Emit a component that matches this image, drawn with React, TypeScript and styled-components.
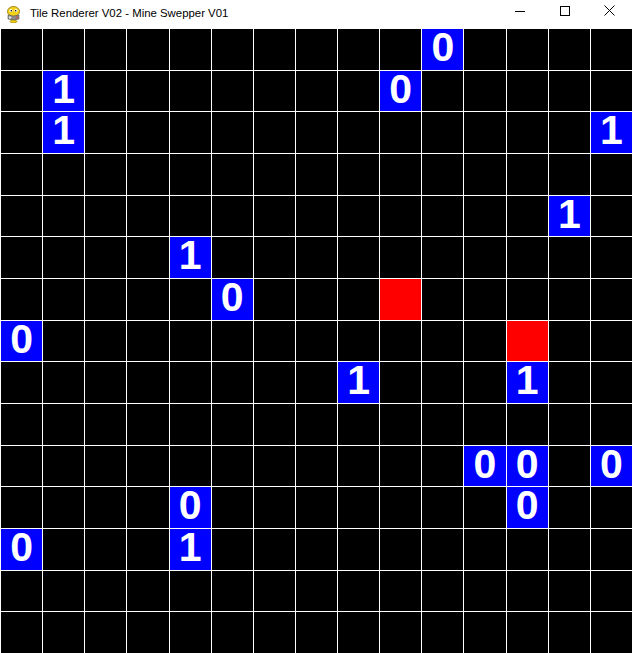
import styled, { createGlobalStyle } from 'styled-components';

const GlobalStyle = createGlobalStyle`
  html, body {
    margin: 0;
    padding: 0;
    background: #ffffff;
    overflow: hidden;
  }
`;

const COLS = 15;
const ROWS = 15;

// revealed tiles: "r,c" -> value ('0', '1' or 'mine')
const tiles: Record<string, string> = {
  '0,10': '0',
  '1,1': '1',
  '1,9': '0',
  '2,1': '1',
  '2,14': '1',
  '4,13': '1',
  '5,4': '1',
  '6,5': '0',
  '6,9': 'mine',
  '7,0': '0',
  '7,12': 'mine',
  '8,8': '1',
  '8,12': '1',
  '10,11': '0',
  '10,12': '0',
  '10,14': '0',
  '11,4': '0',
  '11,12': '0',
  '12,0': '0',
  '12,4': '1',
};

const Window = styled.div`
  width: 632px;
  height: 653px;
  display: flex;
  flex-direction: column;
  background: #ffffff;
`;

const TitleBar = styled.div`
  height: 29px;
  flex: none;
  display: flex;
  align-items: center;
  background: #ffffff;
  font-family: 'Liberation Sans', Arial, sans-serif;
  font-size: 11.4px;
  color: #000000;
`;

const AppIcon = styled.svg`
  width: 17px;
  height: 17px;
  margin-left: 5px;
  margin-right: 8px;
`;

const Title = styled.span`
  flex: 1;
  line-height: 1;
  margin-top: -1px;
`;

const Controls = styled.div`
  display: flex;
  height: 29px;
`;

const CtrlButton = styled.div`
  width: 45px;
  height: 29px;
  display: flex;
  align-items: center;
  justify-content: center;
  margin-top: -4px;
`;

const Board = styled.div`
  flex: 1;
  margin-left: 1px;
  display: grid;
  grid-template-columns: repeat(${COLS}, 1fr);
  grid-template-rows: repeat(${ROWS}, 1fr);
  gap: 1px;
  background: #ffffff;
`;

const Tile = styled.div<{ $kind: string }>`
  background: ${(p) =>
    p.$kind === 'mine' ? '#ff0000' : p.$kind === 'hidden' ? '#000000' : '#0000ff'};
  display: flex;
  justify-content: center;
  align-items: flex-start;
`;

const Digit = styled.span`
  font-family: 'Liberation Sans', Arial, sans-serif;
  font-weight: bold;
  font-size: 41px;
  line-height: 36px;
  color: #ffffff;
`;

function App() {
  const cells = [];
  for (let r = 0; r < ROWS; r++) {
    for (let c = 0; c < COLS; c++) {
      const v = tiles[`${r},${c}`];
      const kind = v === undefined ? 'hidden' : v;
      cells.push(
        <Tile key={`${r}-${c}`} $kind={kind}>
          {v && v !== 'mine' && <Digit>{v}</Digit>}
        </Tile>
      );
    }
  }

  return (
    <>
      <GlobalStyle />
      <Window>
        <TitleBar>
          <AppIcon viewBox="0 0 17 17">
            <ellipse cx="8.5" cy="5.5" rx="6" ry="5" fill="#f2d21b" stroke="#8a6d00" strokeWidth="0.8" />
            <circle cx="6" cy="4.5" r="1.6" fill="#ffffff" />
            <circle cx="11" cy="4.5" r="1.6" fill="#ffffff" />
            <circle cx="6.3" cy="4.7" r="0.8" fill="#000000" />
            <circle cx="10.7" cy="4.7" r="0.8" fill="#000000" />
            <path d="M3 9 Q8.5 11 14 9 L14 13 Q8.5 15 3 13 Z" fill="#8c8c8c" stroke="#555" strokeWidth="0.6" />
            <circle cx="5" cy="11.5" r="1.3" fill="#e0e0e0" />
            <circle cx="12" cy="11.5" r="1.3" fill="#b86060" />
            <ellipse cx="8.5" cy="15.5" rx="3.5" ry="1.4" fill="#f2d21b" stroke="#8a6d00" strokeWidth="0.6" />
          </AppIcon>
          <Title>Tile Renderer V02 - Mine Swepper V01</Title>
          <Controls>
            <CtrlButton>
              <svg width="10" height="10" viewBox="0 0 10 10">
                <line x1="0" y1="5.5" x2="10" y2="5.5" stroke="#000" strokeWidth="1" />
              </svg>
            </CtrlButton>
            <CtrlButton>
              <svg width="10" height="10" viewBox="0 0 10 10">
                <rect x="0.5" y="0.5" width="9" height="9" fill="none" stroke="#000" strokeWidth="1" />
              </svg>
            </CtrlButton>
            <CtrlButton>
              <svg width="11" height="11" viewBox="0 0 11 11">
                <path d="M0.5 0.5 L10.5 10.5 M10.5 0.5 L0.5 10.5" stroke="#000" strokeWidth="1" />
              </svg>
            </CtrlButton>
          </Controls>
        </TitleBar>
        <Board>{cells}</Board>
      </Window>
    </>
  );
}

export default App;
